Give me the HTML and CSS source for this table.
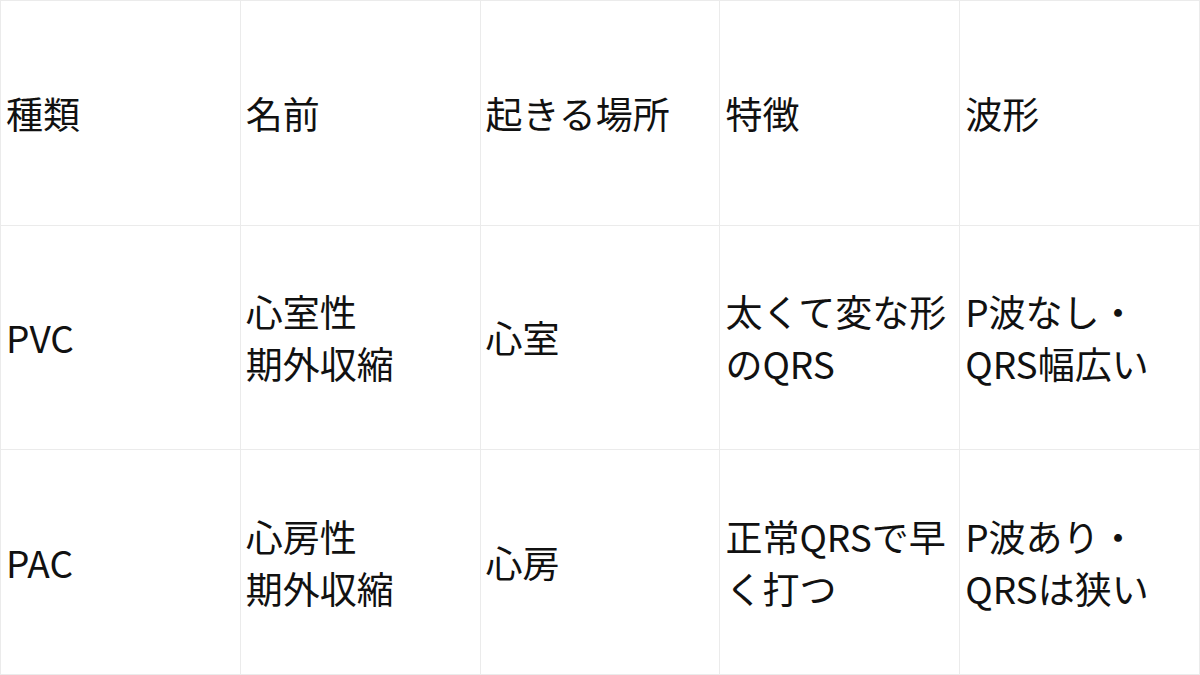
FILE: index.html
```html
<!DOCTYPE html>
<html lang="ja">
<head>
<meta charset="utf-8">
<link rel="stylesheet" href="styles.css">
</head>
<body>
<div class="table">
  <div class="cell">種類</div>
  <div class="cell">名前</div>
  <div class="cell">起きる場所</div>
  <div class="cell">特徴</div>
  <div class="cell">波形</div>

  <div class="cell">PVC</div>
  <div class="cell">心室性<br>期外収縮</div>
  <div class="cell">心室</div>
  <div class="cell">太くて変な形のQRS</div>
  <div class="cell">P波なし・QRS幅広い</div>

  <div class="cell">PAC</div>
  <div class="cell">心房性<br>期外収縮</div>
  <div class="cell">心房</div>
  <div class="cell">正常QRSで早く打つ</div>
  <div class="cell">P波あり・QRSは狭い</div>
</div>
</body>
</html>
```

FILE: styles.css
```css
html, body {
  margin: 0;
  padding: 0;
  background: #ffffff;
}

.table {
  box-sizing: border-box;
  width: 1200px;
  height: 675px;
  display: grid;
  grid-template-columns: repeat(5, 1fr);
  grid-template-rows: repeat(3, 1fr);
  border-left: 1px solid #ebebeb;
  border-top: 1px solid #ebebeb;
  font-family: "Noto Sans CJK JP", "Noto Sans", sans-serif;
  font-size: 37px;
  line-height: 52px;
  color: #111111;
}

.cell {
  box-sizing: border-box;
  border-right: 1px solid #ebebeb;
  border-bottom: 1px solid #ebebeb;
  padding: 0 4px 0 5px;
  display: flex;
  align-items: center;
  overflow-wrap: anywhere;
}
```
